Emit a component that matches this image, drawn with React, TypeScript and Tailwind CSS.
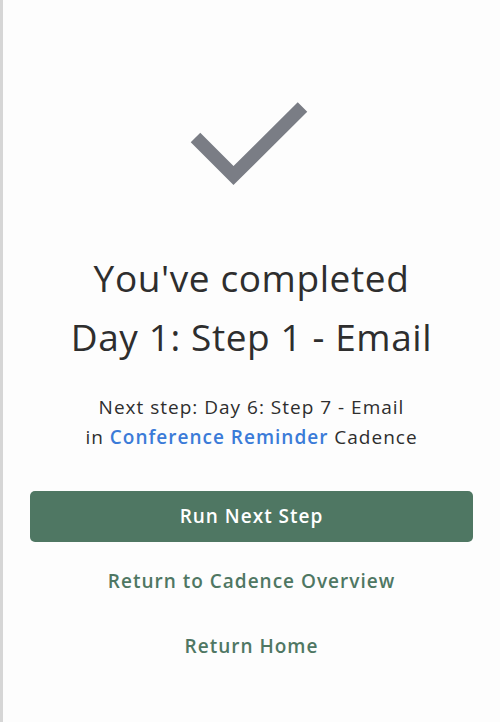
export default function App() {
  return (
    <div className="min-h-[722px] bg-[#fdfdfd] border-l-[3px] border-[#d6d6d6] px-[27px] text-center font-['Open_Sans','Liberation_Sans',sans-serif] text-[#2e2e2e]">
      <div className="flex justify-center pt-[95px]">
        <svg width="130" height="100" viewBox="0 0 130 100" fill="none">
          <path
            d="M8.5 42.5 L46.5 80.5 L115.5 12"
            stroke="#7a7d85"
            strokeWidth="13.5"
            strokeLinejoin="miter"
          />
        </svg>
      </div>

      <h1 className="mt-[53px] text-[37px] leading-[59px] font-normal tracking-[0.6px]">
        You've completed
        <br />
        Day 1: Step 1 - Email
      </h1>

      <p className="mt-[26px] text-[19px] leading-[30px] tracking-[1px]">
        Next step: Day 6: Step 7 - Email
        <br />
        in <a className="font-semibold text-[#3b7bd8]">Conference Reminder</a> Cadence
      </p>

      <button className="mt-[39px] w-full h-[51px] rounded-[5px] bg-[#4f7763] text-white text-[19px] font-semibold tracking-[1px]">
        Run Next Step
      </button>

      <div className="flex flex-col items-center mt-[27px] gap-[41px] text-[#4f7763] text-[19px] font-semibold leading-[24px] tracking-[1px]">
        <a>Return to Cadence Overview</a>
        <a>Return Home</a>
      </div>
    </div>
  );
}
